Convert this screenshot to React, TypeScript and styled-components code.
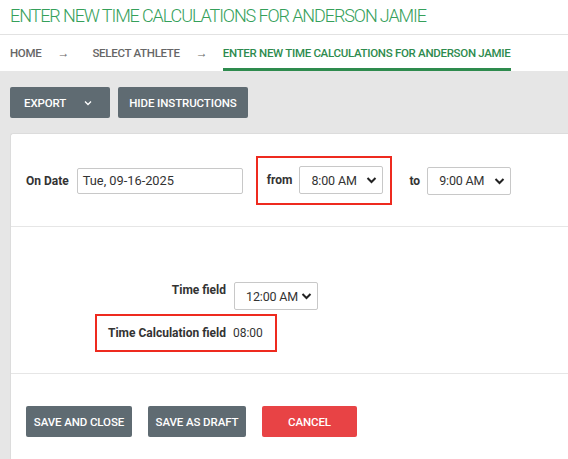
import React, { FC, ReactNode } from "react"
import styled, { createGlobalStyle } from "styled-components"

const GlobalStyle = createGlobalStyle`
    html, body {
        margin: 0;
        padding: 0;
        background: #e6e6e6;
        font-family: Roboto, "Liberation Sans", sans-serif;
        color: #333;
    }
`

const DIN = `"Roboto", "Liberation Sans", sans-serif`

const Page = styled.div`
    width: 100%;
    min-height: 459px;
    overflow: hidden;
    background: #e6e6e6;
`

const Header = styled.div`
    background: #fff;
`

const Title = styled.h1`
    margin: 0;
    height: 35px;
    box-sizing: border-box;
    padding: 5px 0 0 10px;
    font-family: ${DIN};
    font-weight: 300;
    font-size: 18px;
    letter-spacing: -1.1px;
    color: #35a05a;
    white-space: nowrap;
    border-bottom: 1px solid #e2e2e2;
`

const Crumbs = styled.nav`
    display: flex;
    align-items: stretch;
    height: 36px;
    padding-left: 10px;
`

const Crumb = styled.span<{ active?: boolean }>`
    display: flex;
    align-items: center;
    font-family: ${DIN};
    font-weight: 500;
    font-size: 11.5px;
    letter-spacing: -0.3px;
    white-space: nowrap;
    color: ${p => (p.active ? "#2e8b4e" : "#666")};
    border-bottom: 3px solid ${p => (p.active ? "#2e8b4e" : "transparent")};
    padding-top: 3px;
`

const Arrow = styled.span<{ before: number; after: number }>`
    display: flex;
    align-items: center;
    justify-content: center;
    width: 10px;
    margin: 0 ${p => p.after}px 0 ${p => p.before}px;
    font-size: 12px;
    color: #666;
    padding-bottom: 1px;
`

const Body = styled.div`
    padding: 16px 0 0 10px;
`

const Toolbar = styled.div`
    display: flex;
    gap: 8px;
    margin-bottom: 15px;
`

const Button = styled.button<{ tone?: "gray" | "red"; w: number; spread?: boolean }>`
    display: inline-flex;
    align-items: center;
    justify-content: ${p => (p.spread ? "space-between" : "center")};
    height: 31px;
    width: ${p => p.w}px;
    border: none;
    border-radius: 2px;
    background: ${p => (p.tone === "red" ? "#e84345" : "#5f6b72")};
    color: #fff;
    font-family: ${DIN};
    font-weight: 500;
    font-size: 11.5px;
    letter-spacing: -0.1px;
    padding: ${p => (p.spread ? "0 18px 0 14px" : "0")};
    cursor: pointer;
`

const Card = styled.div`
    background: #fff;
    border: 1px solid #dcdcdc;
    border-right: none;
    border-radius: 3px 0 0 0;
    min-height: 330px;
`

const Section = styled.div<{ h: number }>`
    height: ${p => p.h}px;
    box-sizing: border-box;
    border-bottom: 1px solid #e6e6e6;
`

const DateRow = styled.div`
    display: flex;
    align-items: center;
    padding: 22px 0 0 15px;
`

const Label = styled.label`
    font-family: Roboto, sans-serif;
    font-weight: 700;
    font-size: 12px;
    color: #333;
    white-space: nowrap;
`

const Input = styled.div`
    width: 166px;
    height: 26px;
    box-sizing: border-box;
    border: 1px solid #c8c8c8;
    border-radius: 2px;
    margin-left: 8px;
    padding-left: 5px;
    display: flex;
    align-items: center;
    font-size: 12.8px;
    color: #333;
`

const Highlight = styled.div<{ pad: string }>`
    display: flex;
    align-items: center;
    gap: 7px;
    border: 2px solid #ee2a1f;
    padding: ${p => p.pad};
`

const SelectBox = styled.div<{ w: number }>`
    width: ${p => p.w}px;
    height: 28px;
    box-sizing: border-box;
    border: 1px solid #c8c8c8;
    border-radius: 2px;
    display: flex;
    align-items: center;
    justify-content: space-between;
    padding: 0 5px 0 11px;
    font-size: 12.5px;
    letter-spacing: -0.15px;
    white-space: nowrap;
    color: #333;
    background: #fff;
`

const Chevron: FC = () => (
    <svg width="11" height="8" viewBox="0 0 11 8">
        <path d="M1.5 2 L5.5 6 L9.5 2" fill="none" stroke="#222" strokeWidth="2" />
    </svg>
)

const Select: FC<{ w: number; children: ReactNode }> = ({ w, children }) => (
    <SelectBox w={w}>
        <span>{children}</span>
        <Chevron />
    </SelectBox>
)

const ToGroup = styled.div`
    display: flex;
    align-items: center;
    gap: 7px;
    margin-left: 17px;
`

const Fields = styled.div`
    display: grid;
    grid-template-columns: 223px auto;
    align-items: start;
    padding: 55px 0 0 0;
`

const FieldLabel = styled(Label)`
    text-align: right;
    padding: 1px 8px 0 0;
`

const CalcRow = styled.div`
    grid-column: 1 / span 2;
    display: flex;
    margin: 4px 0 0 84px;
`

const Value = styled.span`
    font-size: 12px;
    color: #333;
`

const Actions = styled.div`
    display: flex;
    gap: 16px;
    padding: 32px 0 0 15px;
`

export default function App() {
    return (
        <Page>
            <GlobalStyle />
            <Header>
                <Title>ENTER NEW TIME CALCULATIONS FOR ANDERSON JAMIE</Title>
                <Crumbs>
                    <Crumb>HOME</Crumb>
                    <Arrow before={17} after={24}>→</Arrow>
                    <Crumb>SELECT ATHLETE</Crumb>
                    <Arrow before={17} after={16}>→</Arrow>
                    <Crumb active>ENTER NEW TIME CALCULATIONS FOR ANDERSON JAMIE</Crumb>
                </Crumbs>
            </Header>
            <Body>
                <Toolbar>
                    <Button w={100} spread>
                        EXPORT
                        <svg width="8" height="6" viewBox="0 0 8 6">
                            <path d="M1 1.5 L4 4.5 L7 1.5" fill="none" stroke="#fff" strokeWidth="1.3" />
                        </svg>
                    </Button>
                    <Button w={130}>HIDE INSTRUCTIONS</Button>
                </Toolbar>
                <Card>
                    <Section h={93}>
                        <DateRow>
                            <Label>On Date</Label>
                            <Input>Tue, 09-16-2025</Input>
                            <Highlight pad="8px 7px 9px 9px" style={{ marginLeft: 13 }}>
                                <Label>from</Label>
                                <Select w={84}>8:00 AM</Select>
                            </Highlight>
                            <ToGroup>
                                <Label>to</Label>
                                <Select w={84}>9:00 AM</Select>
                            </ToGroup>
                        </DateRow>
                    </Section>
                    <Section h={147}>
                        <Fields>
                            <FieldLabel>Time field</FieldLabel>
                            <Select w={84}>12:00 AM</Select>
                            <CalcRow>
                                <Highlight pad="10px 12px 10px 11px">
                                    <Label>Time Calculation field</Label>
                                    <Value>08:00</Value>
                                </Highlight>
                            </CalcRow>
                        </Fields>
                    </Section>
                    <Actions>
                        <Button w={106}>SAVE AND CLOSE</Button>
                        <Button w={98}>SAVE AS DRAFT</Button>
                        <Button w={95} tone="red">CANCEL</Button>
                    </Actions>
                </Card>
            </Body>
        </Page>
    )
}
